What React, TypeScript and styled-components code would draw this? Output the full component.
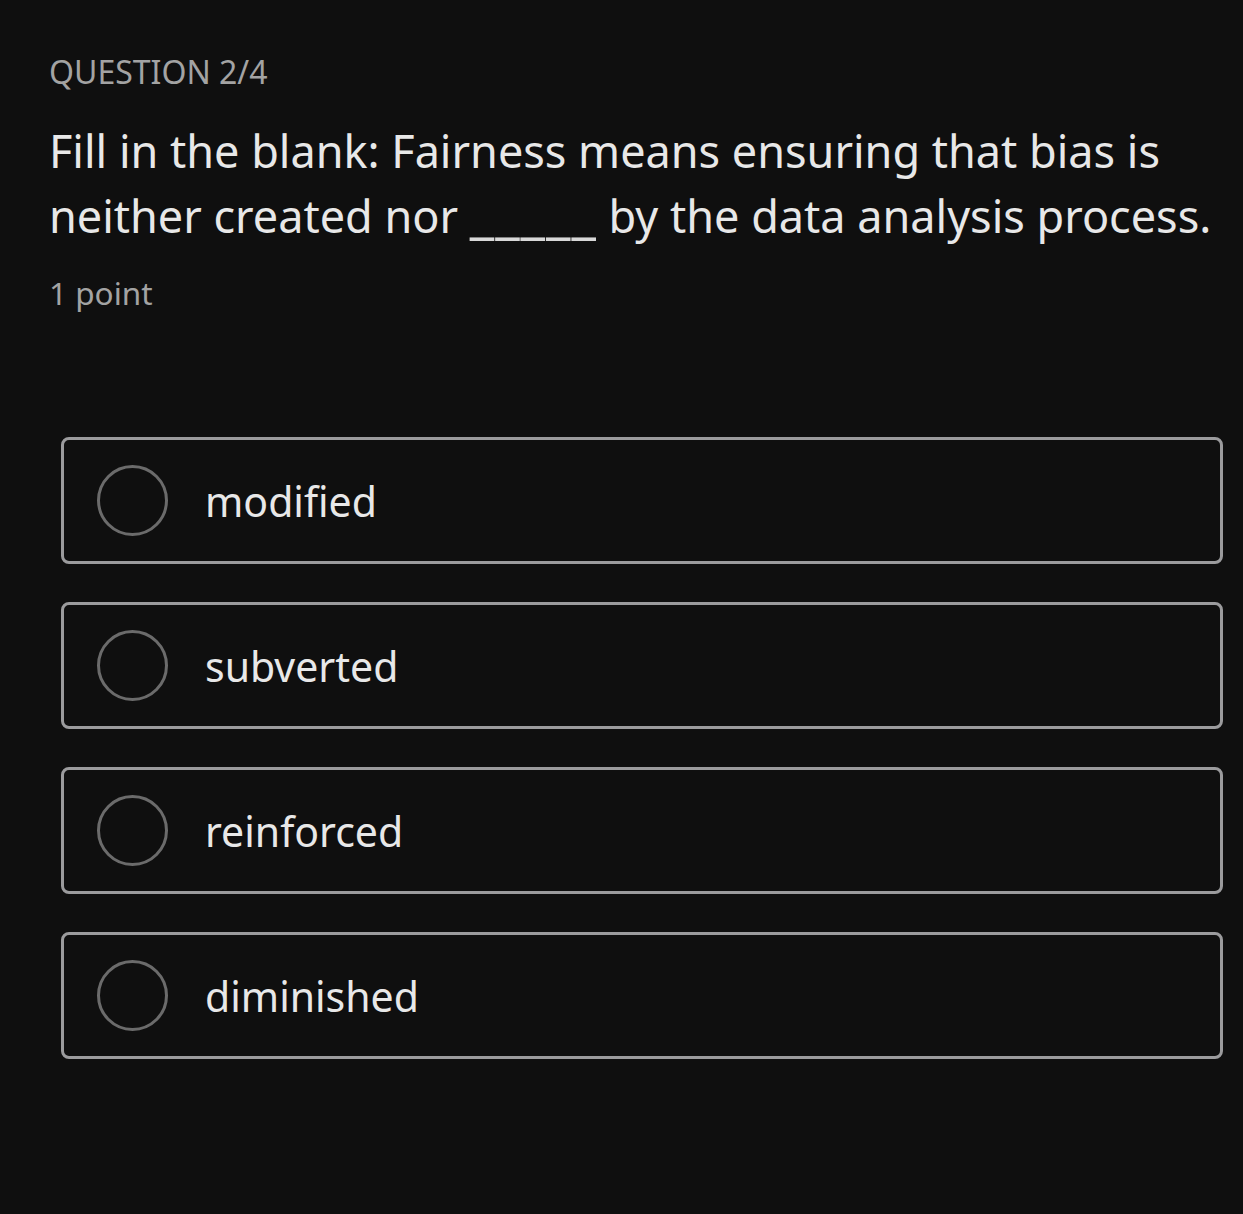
import React from "react";
import styled, { createGlobalStyle } from "styled-components";

const GlobalStyle = createGlobalStyle`
  html, body {
    margin: 0;
    padding: 0;
    background: #0f0f0f;
  }
  body {
    font-family: "Noto Sans", "Open Sans", sans-serif;
    font-variant-ligatures: none;
  }
`;

const Page = styled.div`
  min-height: 1214px;
  background: #0f0f0f;
  padding: 52px 20px 0 49px;
  box-sizing: border-box;
`;

const Counter = styled.div`
  font-size: 32px;
  color: #a3a3a3;
  line-height: 40px;
`;

const Prompt = styled.h1`
  margin: 26px 0 0;
  font-size: 45px;
  font-weight: 400;
  line-height: 65px;
  color: #e8e8e8;
`;

// wider underscores, 1px apart, like the reference's blank
const Blank = styled.span`
  font-size: 55px;
  line-height: 0;
  letter-spacing: 1px;
  color: #d8d8d8;
`;

const Points = styled.div`
  margin-top: 25px;
  font-size: 31.5px;
  line-height: 40px;
  color: #a3a3a3;
`;

const Options = styled.div`
  margin: 124px 0 0 12px;
  display: flex;
  flex-direction: column;
  gap: 38px;
`;

const Option = styled.label`
  display: flex;
  align-items: center;
  height: 127px;
  box-sizing: border-box;
  border: 3px solid #9b9b9d;
  border-radius: 8px;
  padding-left: 33px;
  cursor: pointer;
`;

const Radio = styled.span`
  width: 71px;
  height: 71px;
  box-sizing: border-box;
  border: 3px solid #6b6b6b;
  border-radius: 50%;
  flex-shrink: 0;
`;

const OptionText = styled.span`
  margin-left: 37px;
  font-size: 41px;
  color: #e8e8e8;
`;

const choices = ["modified", "subverted", "reinforced", "diminished"];

export default function App() {
  return (
    <>
      <GlobalStyle />
      <Page>
        <Counter>QUESTION 2/4</Counter>
        <Prompt>
          Fill in the blank: Fairness means ensuring that bias is neither
          created nor <Blank>_____</Blank> by the data analysis process.
        </Prompt>
        <Points>1 point</Points>
        <Options>
          {choices.map((c) => (
            <Option key={c}>
              <Radio />
              <OptionText>{c}</OptionText>
            </Option>
          ))}
        </Options>
      </Page>
    </>
  );
}
